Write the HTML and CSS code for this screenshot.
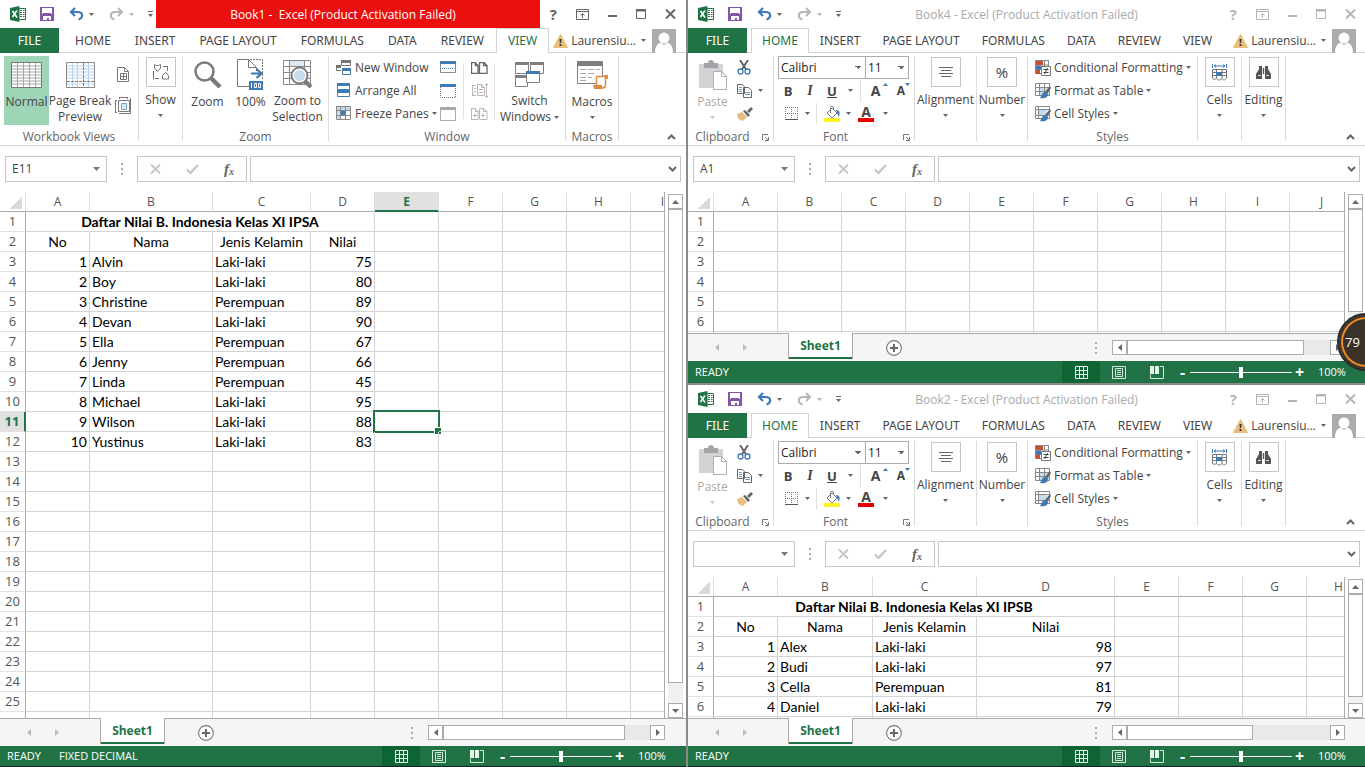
FILE: index.html
```
<!DOCTYPE html>
<html lang="en">
<head>
  <meta charset="UTF-8">
  <meta name="viewport" content="width=device-width, initial-scale=1.0">
  <title>Excel</title>
  <link rel="stylesheet" href="styles.css">
</head>
<body>

  <svg class="sprite" aria-hidden="true">
    <symbol id="excel" viewBox="0 0 16 16">
      <path d="M9 2.5h6.5v11H9" fill="#fff" stroke="#217346"/>
      <path d="M10 4.5h2M13 4.5h1.500M10 6.500h2M13 6.500h1.500M10 8.500h2M13 8.500h1.500M10 10.500h2M13 10.500h1.500" stroke="#217346"/>
      <path d="M0 2l9.500-2v16L0 14z" fill="#217346"/>
      <path d="M2.500 5l4.500 6.500M7 4.500l-4.500 6.500" stroke="#fff" stroke-width="1.600"/>
    </symbol>
    <symbol id="save" viewBox="0 0 14 14">
      <path d="M0 0h14v14H0z" fill="#8355a4"/>
      <path d="M2 1h10v6H2zM3 9h8v4H9v-2H7v2H3z" fill="#fff"/>
      <path d="M3 7h8v-1H3z" fill="#8355a4"/>
    </symbol>
    <symbol id="undo" viewBox="0 0 15 14">
      <path d="M6 1L2 5l4 4M2 5h6.500c6 0 6 6 1 7.500" fill="none" stroke="currentColor" stroke-width="2.200"/>
    </symbol>
    <symbol id="redo" viewBox="0 0 15 14">
      <path d="M9 1l4 4-4 4M13 5H6.500c-6 0-6 6-1 7.500" fill="none" stroke="currentColor" stroke-width="2"/>
    </symbol>
    <symbol id="customize" viewBox="0 0 5 6">
      <path d="M0 0h5v1H0zM0 3h5L2.500 6z" fill="#666"/>
    </symbol>
    <symbol id="arrow" viewBox="0 0 5 3">
      <path d="M0 0h5L2.500 3z" fill="currentColor"/>
    </symbol>
    <symbol id="ribbon-toggle" viewBox="0 0 13 11">
      <path d="M.5.5h12v10H.5zM.5 2.500h12M6.500 9V5M4.500 6.500l2-2 2 2" fill="none" stroke="currentColor"/>
    </symbol>
    <symbol id="minimize" viewBox="0 0 9 11"><path d="M0 6h9v2H0z" fill="currentColor"/></symbol>
    <symbol id="maximize" viewBox="0 0 10 10"><path d="M.5.5h9v9H.5zM0 1.500h10" fill="none" stroke="currentColor"/><path d="M0 0h10v2.500H0z" fill="currentColor"/></symbol>
    <symbol id="close" viewBox="0 0 11 10"><path d="M1 .5l9 9M10 .5l-9 9" stroke="currentColor" stroke-width="2"/></symbol>
    <symbol id="warning" viewBox="0 0 15 14">
      <path d="M7.500.5L14.500 13.500H.5z" fill="#e8bf7a" stroke="#e8bf7a" stroke-linejoin="round"/>
      <path d="M6.500 5h2l-.4 4h-1.200zM6.600 10h1.800v2H6.600z" fill="#333"/>
    </symbol>
    <symbol id="avatar" viewBox="0 0 24 24">
      <path d="M0 0h24v24H0z" fill="#ababab"/>
      <circle cx="12" cy="9" r="5.500" fill="#fff"/>
      <path d="M3 24c0-9 4-10 6-10l3 2 3-2c2 0 6 1 6 10z" fill="#fff"/>
    </symbol>
    <symbol id="collapse" viewBox="0 0 9 6"><path d="M1 5l3.500-3.500L8 5" fill="none" stroke="#666" stroke-width="2"/></symbol>
    <symbol id="expand" viewBox="0 0 9 6"><path d="M1 1l3.500 3.500L8 1" fill="none" stroke="#666" stroke-width="2"/></symbol>
    <symbol id="launcher" viewBox="0 0 7 7"><path d="M.5 6V.5H6M3 3l3 3M6.500 3v3.500H3" fill="none" stroke="#777"/></symbol>

    <symbol id="normal" viewBox="0 0 31 26">
      <path d="M.5.5h30v25H.5z" fill="#fff"/>
      <path d="M1 4h29M1 7h29M1 10h29M1 13h29M1 16h29M1 19h29M1 22h29M6.500 1v24M12.500 1v24M18.500 1v24M24.500 1v24" stroke="#a6a6a6"/>
      <path d="M.5.5h30v25H.5z" fill="none" stroke="#777"/>
    </symbol>
    <symbol id="page-break" viewBox="0 0 29 26">
      <path d="M1 4h27M1 7h27M1 10h27M1 13h27M1 16h27M1 22h27M6.500 1v24M11.500 1v24M22.500 1v24" stroke="#b9d3ec"/>
      <path d="M.5.5h28v25H.5z" fill="none" stroke="#8a8a8a"/>
      <path d="M17.500 1v24M1 19.500h27" stroke="#777" stroke-dasharray="3 1"/>
    </symbol>
    <symbol id="page-layout" viewBox="0 0 12 15">
      <path d="M.5.5h7l4 4v10H.5zM7.500.5v4h4M3.500 6.500h6v6h-6zM6.500 6.500v6M3.500 9.500h6" fill="none" stroke="#777"/>
    </symbol>
    <symbol id="custom-views" viewBox="0 0 16 17">
      <path d="M3.500 3.500h11v11h-11zM.5 4v11M0 3.500h2M0 15.500h2M4 .5h9M4.500 0v2M12.500 0v2M15.500 1v15.500H4" fill="none" stroke="#777"/>
      <path d="M6.500 6.500h5v6h-5z" fill="#dbe8f5" stroke="#7aa3cc"/>
    </symbol>
    <symbol id="show" viewBox="0 0 16 16">
      <path d="M.5 15.500V7M2 14.500h4M4.500 7.500L1.500 4V.5l2 1h2l2-1V4zM10 2.500h5M14.500 3v4M9.500 11.500l3-3 3 3v3.500h-6z" fill="none" stroke="#777"/>
    </symbol>
    <symbol id="zoom" viewBox="0 0 28 28">
      <circle cx="10.500" cy="10.500" r="9" fill="#fff" stroke="#7b7b7b" stroke-width="2.500"/>
      <path d="M17 17l9 9" stroke="#7b7b7b" stroke-width="4.500"/>
    </symbol>
    <symbol id="zoom-100" viewBox="0 0 27 32">
      <path d="M12 27.500H.5V.5h11l8 8V12M11.500.5v8h8" fill="none" stroke="#777"/>
      <path d="M13 .5h12.500V20" fill="none" stroke="#777" stroke-dasharray="2 1"/>
      <path d="M14 14.500h10M19.500 10l5 4.500-5 4.500" fill="none" stroke="#3e7ab4" stroke-width="2.200"/>
      <path d="M12 22h14v9H12z" fill="#3e7ab4"/>
      <path d="M14.500 24v5M17.500 24.500h2v4h-2zM21.500 24.500h2v4h-2z" fill="none" stroke="#fff"/>
    </symbol>
    <symbol id="zoom-selection" viewBox="0 0 30 29">
      <path d="M.5.500h27v24H.5zM.5 6.500h27M.5 12.500h27M.5 18.500h27M6.500.5v24M21.500.5v24" fill="none" stroke="#8a8a8a"/>
      <path d="M7 1h14v5H7z" fill="#dbe8f5"/>
      <circle cx="16.500" cy="15.500" r="8" fill="#fff" stroke="#7b7b7b" stroke-width="2"/>
      <circle cx="16.500" cy="15.500" r="5.500" fill="#c5dbf0"/>
      <path d="M22 21l6 6" stroke="#7b7b7b" stroke-width="4"/>
    </symbol>
    <symbol id="new-window" viewBox="0 0 16 16">
      <path d="M5.500.5h9v5h-9zM.5 5.500v5H5" fill="none" stroke="#777"/>
      <path d="M5 0h10v3H5zM0 5h5v3H0z" fill="#777"/>
      <path d="M6.500 8.500h8v6h-8z" fill="#fff" stroke="#3e7ab4"/>
      <path d="M6 8h9v3H6z" fill="#3e7ab4"/>
    </symbol>
    <symbol id="arrange" viewBox="0 0 16 15">
      <path d="M1.500.5h12v6h-12zM1.500 7.500h12v6h-12z" fill="none" stroke="#3e7ab4"/>
      <path d="M1 0h13v3H1zM1 7h13v3H1z" fill="#3e7ab4"/>
    </symbol>
    <symbol id="freeze" viewBox="0 0 16 15">
      <path d="M1 1h14v4H1zM1 5h4v9H1z" fill="#c5dbf0"/>
      <path d="M.5.5h14v13H.5zM.5 4.500h14M.5 9.500h14M4.500.5v13M9.500.5v13" fill="none" stroke="#888"/>
      <path d="M5 5h4v4H5z" fill="#3e7ab4"/>
    </symbol>
    <symbol id="split" viewBox="0 0 16 13">
      <path d="M.5.5h15v11H.5z" fill="none" stroke="#888"/><path d="M0 0h16v3H0z" fill="#3e7ab4"/>
      <path d="M2 7.500h12" stroke="#3e7ab4" stroke-dasharray="1 1"/>
    </symbol>
    <symbol id="hide" viewBox="0 0 16 14">
      <path d="M.5 3v10.500h15V3" fill="none" stroke="#777" stroke-dasharray="1 1"/><path d="M0 0h16v3H0z" fill="#3e7ab4"/>
    </symbol>
    <symbol id="unhide" viewBox="0 0 16 14">
      <path d="M.5.5h15v13H.5z" fill="#fff" stroke="#aaa"/><path d="M0 0h16v3H0z" fill="#aaa"/>
    </symbol>
    <symbol id="side-by-side" viewBox="0 0 17 12">
      <path d="M.5.5H4l3 3v8H.5zM4.500.5v3h3M8.500.5H13l3 3v8H8.500zM12.500.5v3h3" fill="none" stroke="currentColor" stroke-width="1.300"/>
    </symbol>
    <symbol id="reset-position" viewBox="0 0 17 12">
      <path d="M.5.5H4l3 3v8H.5zM4.500.5v3h3M8.500.5H13l3 3v8H8.500zM12.500.5v3h3M2 7.500h4M4 5.500v4M10 7.500h4M12 5.500v4" fill="none" stroke="currentColor"/>
    </symbol>
    <symbol id="sync-scroll" viewBox="0 0 16 15">
      <path d="M5.500 1.500h4l3 3v8h-7zM9.500 1.500v3h3M0 2.500h4M.5 2v11M0 12.500h4M2 5.500h2M2 8.500h2M7 6.500h4M7 9.500h4M14.500 1v13M13 2l1.500-1.500L16 2M13 13l1.500 1.500L16 13" fill="none" stroke="#bdb3bd"/>
    </symbol>
    <symbol id="switch" viewBox="0 0 30 26">
      <path d="M.5.5h13v11H.5zM15.500.5h13v11h-13zM.5 13.500h12v11H.5z" fill="#fff" stroke="#7f7f7f"/>
      <path d="M0 0h14v3H0zM15 0h14v3H15zM0 13h12v3H0z" fill="#7f7f7f"/>
      <path d="M11.500 9.500h13v11h-13z" fill="#fff" stroke="#7f7f7f"/><path d="M11 9h14v3H11z" fill="#3e7ab4"/>
    </symbol>
    <symbol id="macros" viewBox="0 0 31 29">
      <path d="M.5.5h25v22H.5z" fill="#fff" stroke="#7f7f7f"/><path d="M0 0h26v5H0z" fill="#7f7f7f"/>
      <path d="M3 8.500h6M11 8.500h6M19 8.500h4M3 12.500h6M11 12.500h6M3 16.500h6M11 16.500h4M3 19.500h6" stroke="#aaa"/>
      <path d="M19.500 25V15.500h9v8.500c0 2-1 3-3 3h-8" fill="#fff" stroke="#dc8a45" stroke-width="1.500"/>
      <path d="M16 24h9v4h-8zM27 14h4v4h-3z" fill="#dc8a45"/>
    </symbol>

    <symbol id="paste" viewBox="0 0 28 31">
      <path d="M0 4h24v24H0z" fill="#d5d2d6"/>
      <path d="M5 3h4c0-4 6-4 6 0h4v5H5z" fill="#a5a3a6"/>
      <path d="M14.500 11.500h8l5 5v13h-13z" fill="#fff" stroke="#b3abb8"/><path d="M22.500 11.500v5h5" fill="none" stroke="#b3abb8"/>
    </symbol>
    <symbol id="cut" viewBox="0 0 14 15">
      <path d="M3 0l6.500 10M11 0L4.500 10" stroke="#666" stroke-width="2"/>
      <circle cx="3.500" cy="11.500" r="2.500" fill="#fff" stroke="#3e7ab4" stroke-width="1.300"/><circle cx="10.500" cy="11.500" r="2.500" fill="#fff" stroke="#3e7ab4" stroke-width="1.300"/>
    </symbol>
    <symbol id="copy" viewBox="0 0 15 14">
      <path d="M.5.5h5l2 2v7h-7zM6.500 3.500h5l3 3v7h-8z" fill="#fff" stroke="#666"/>
      <path d="M2 3.500h3M2 5.500h3M2 7.500h3M8 8.500h5M8 10.500h5" stroke="#6c9ccb"/>
    </symbol>
    <symbol id="painter" viewBox="0 0 16 14">
      <path d="M0 7l5-2 5 5-4 4c-1-1-2 0-3-1s-2 0-3-6z" fill="#e6bd82"/>
      <path d="M6 4l2-1 5 5-2 2zM10 4l4-4 2 2-4 4z" fill="#666"/>
    </symbol>
    <symbol id="borders" viewBox="0 0 14 13">
      <path d="M0 .5h13M0 6.500h13M.5 0v12M6.500 0v12M12.500 0v12" stroke="#777" stroke-dasharray="1 1"/><path d="M0 12.500h13" stroke="#555"/>
    </symbol>
    <symbol id="fill" viewBox="0 0 16 16">
      <path d="M3 7l5-5 5 5-5 5z" fill="#fff" stroke="#777"/><path d="M6.500 7V1.500c0-1.500 3-1.500 3 0V4" fill="none" stroke="#777"/>
      <path d="M12 4c4 0 4 3 3 7l-2-4z" fill="#3e7ab4"/><path d="M0 12h16v4H0z" fill="#fdf224"/>
    </symbol>
    <symbol id="align" viewBox="0 0 14 11"><path d="M0 .5h14M2 3.500h10M0 6.500h14M2 9.500h10" stroke="#666"/></symbol>
    <symbol id="conditional" viewBox="0 0 16 16">
      <path d="M.5.5h13v13H.5zM.5 5h13M.5 9.500h13M9.500.5v13" fill="none" stroke="#888"/>
      <path d="M1 1h7v4H1zM1 10h4v4H1z" fill="#c84f32"/><path d="M1 5.500h5v4H1z" fill="#3e7ab4"/>
      <path d="M6.500 6.500h9v9h-9z" fill="#fff" stroke="#777"/><path d="M8.500 9.500h5M8.500 12.500h5M12.500 8l-3 6" stroke="#444"/>
    </symbol>
    <symbol id="format-table" viewBox="0 0 16 16">
      <path d="M4 4h11v9H4z" fill="#c5dbf0"/><path d="M.5.5h14v12H.5zM.5 4.500h14M.5 8.500h14M4.500.5v12M9.500.5v12" fill="none" stroke="#888"/>
      <path d="M15 3l-5 6 2 2 4-6z" fill="#666"/><path d="M11 9c-4 0-4 3-6 6 4 1 8 0 8-4z" fill="#3e7ab4"/>
    </symbol>
    <symbol id="cell-styles" viewBox="0 0 16 16">
      <path d="M4 4h8v5H4z" fill="#c5dbf0"/><path d="M.5.5h14v12H.5zM.5 3.500h14M.5 9.500h14M3.500.5v12" fill="none" stroke="#888"/>
      <path d="M15 3l-5 6 2 2 4-6z" fill="#666"/><path d="M11 9c-4 0-4 3-6 6 4 1 8 0 8-4z" fill="#3e7ab4"/>
    </symbol>
    <symbol id="cells" viewBox="0 0 16 17">
      <path d="M.5 0v4M14.500 0v4M2 2h11M4 .5L2 2l2 1.500M11 .5L13 2l-2 1.500" fill="none" stroke="#3e7ab4"/>
      <path d="M.5 5.500h14v9c-2 2-3 2-4.500 0-2 2-4 2-5.500 0-2 1-3 1-4 0zM.5 8.500h14M.5 11.500h14M4.500 5.500v9M10 5.500v9" fill="none" stroke="#777"/>
      <path d="M4 8h6v4H4z" fill="#3e7ab4"/>
    </symbol>
    <symbol id="find" viewBox="0 0 15 14">
      <path d="M3 1h3v2h3V1h3v3l3 5v5H9V9H6v5H0V9l3-5z" fill="#555"/><path d="M6.500 3v6M8.500 3v6M2 10.500h3M10 10.500h3" stroke="#ddd"/>
    </symbol>

    <symbol id="cancel" viewBox="0 0 11 10"><path d="M1 .5l9 9M10 .5l-9 9" stroke="#c6c6c6" stroke-width="2"/></symbol>
    <symbol id="enter" viewBox="0 0 13 10"><path d="M1 5.500l3.500 3.500L12 1" fill="none" stroke="#c6c6c6" stroke-width="2.400"/></symbol>
    <symbol id="plus" viewBox="0 0 16 16"><circle cx="8" cy="8" r="7.400" fill="#fff" stroke="#777" stroke-width="1.100"/><path d="M4 8h8M8 4v8" stroke="#666" stroke-width="2"/></symbol>
    <symbol id="left" viewBox="0 0 4 7"><path d="M4 0v7L0 3.500z" fill="currentColor"/></symbol>
    <symbol id="right" viewBox="0 0 4 7"><path d="M0 0v7l4-3.500z" fill="currentColor"/></symbol>
    <symbol id="up" viewBox="0 0 7 4"><path d="M0 4h7L3.500 0z" fill="currentColor"/></symbol>
    <symbol id="down" viewBox="0 0 7 4"><path d="M0 0h7L3.500 4z" fill="currentColor"/></symbol>
    <symbol id="view-normal" viewBox="0 0 13 13"><path d="M.5.5h12v12H.5zM4.500.5v12M8.500.5v12M.5 4.500h12M.5 8.500h12" fill="none" stroke="#e8f3ec"/></symbol>
    <symbol id="view-page" viewBox="0 0 14 13"><path d="M.5.5h13v12H.5zM3.500 2.500h7v8h-7zM5 4.500h4M5 6.500h4M5 8.500h4" fill="none" stroke="#d5e8dc"/></symbol>
    <symbol id="view-break" viewBox="0 0 14 13"><path d="M.5 8.500v4h13V.5H10" fill="none" stroke="#d5e8dc"/><path d="M0 0h4v8H0zM5 0h4v8H5z" fill="#e8f3ec"/></symbol>
  </svg>

  <template id="view-ribbon">
    <section class="group g-views">
      <div class="tools">
        <button class="big on" data-icon="normal 31 26">Normal</button>
        <button class="big" data-icon="page-break 29 26">Page Break<br>Preview</button>
        <div class="col views-col">
          <button data-icon="page-layout 12 15" aria-label="Page Layout"></button>
          <button data-icon="custom-views 16 17" aria-label="Custom Views"></button>
        </div>
      </div>
      <h2>Workbook Views</h2>
    </section>
    <section class="group g-show">
      <div class="tools"><button class="boxed" data-icon="show 16 16" data-drop>Show</button></div>
    </section>
    <section class="group g-zoom">
      <div class="tools">
        <button class="big" data-icon="zoom 28 28">Zoom</button>
        <button class="big" data-icon="zoom-100 27 32">100%</button>
        <button class="big" data-icon="zoom-selection 30 29">Zoom to<br>Selection</button>
      </div>
      <h2>Zoom</h2>
    </section>
    <section class="group g-window">
      <div class="tools">
        <div class="col">
          <button class="row" data-icon="new-window 16 16">New Window</button>
          <button class="row" data-icon="arrange 16 15">Arrange All</button>
          <button class="row" data-icon="freeze 16 15">Freeze Panes <svg class="drop"><use href="#arrow"/></svg></button>
        </div>
        <div class="col lined">
          <button data-icon="split 16 13" aria-label="Split"></button>
          <button data-icon="hide 16 14" aria-label="Hide"></button>
          <button data-icon="unhide 16 14" aria-label="Unhide" disabled></button>
        </div>
        <div class="col lined">
          <button data-icon="side-by-side 17 12" aria-label="View Side by Side"></button>
          <button data-icon="sync-scroll 16 15" aria-label="Synchronous Scrolling" disabled></button>
          <button data-icon="reset-position 17 12" aria-label="Reset Window Position" disabled></button>
        </div>
        <button class="big" data-icon="switch 30 26">Switch<br>Windows <svg class="drop"><use href="#arrow"/></svg></button>
      </div>
      <h2>Window</h2>
    </section>
    <section class="group g-macros">
      <div class="tools"><button class="big" data-icon="macros 31 29" data-drop>Macros</button></div>
      <h2>Macros</h2>
    </section>
  </template>

  <template id="home-ribbon">
    <section class="group g-clipboard">
      <div class="tools">
        <button class="big" data-icon="paste 28 31" data-drop disabled>Paste</button>
        <div class="col">
          <button class="row" data-icon="cut 14 15" aria-label="Cut"></button>
          <button class="row" data-icon="copy 15 14" aria-label="Copy"><svg class="drop"><use href="#arrow"/></svg></button>
          <button class="row" data-icon="painter 16 14" aria-label="Format Painter"></button>
        </div>
      </div>
      <h2>Clipboard</h2><svg class="launcher"><use href="#launcher"/></svg>
    </section>
    <section class="group g-font">
      <div class="tools col">
        <div class="combos">
          <select aria-label="Font"><option>Calibri</option></select>
          <select aria-label="Font size"><option>11</option></select>
        </div>
        <div class="glyphs">
          <button class="b">B</button><button class="i">I</button><button class="u">U</button>
          <button class="d" aria-label="Underline style"><svg class="drop"><use href="#arrow"/></svg></button>
          <button class="grow">A<svg><use href="#up"/></svg></button><button class="shrink">A<svg><use href="#down"/></svg></button>
        </div>
        <div class="glyphs">
          <button class="bd" data-icon="borders 14 13" aria-label="Borders"><svg class="drop"><use href="#arrow"/></svg></button>
          <button class="fl" data-icon="fill 16 16" aria-label="Fill color"><svg class="drop"><use href="#arrow"/></svg></button>
          <button class="fc"><span>A</span><svg class="drop"><use href="#arrow"/></svg></button>
        </div>
      </div>
      <h2>Font</h2><svg class="launcher"><use href="#launcher"/></svg>
    </section>
    <section class="group g-align"><div class="tools"><button class="boxed" data-icon="align 14 11" data-drop>Alignment</button></div></section>
    <section class="group g-number"><div class="tools"><button class="boxed" data-drop><span class="frame">%</span>Number</button></div></section>
    <section class="group g-styles">
      <div class="tools col">
        <button class="row" data-icon="conditional 16 16">Conditional Formatting <svg class="drop"><use href="#arrow"/></svg></button>
        <button class="row" data-icon="format-table 16 16">Format as Table <svg class="drop"><use href="#arrow"/></svg></button>
        <button class="row" data-icon="cell-styles 16 16">Cell Styles <svg class="drop"><use href="#arrow"/></svg></button>
      </div>
      <h2>Styles</h2>
    </section>
    <section class="group g-cells"><div class="tools"><button class="boxed" data-icon="cells 16 17" data-drop>Cells</button></div></section>
    <section class="group g-cells"><div class="tools"><button class="boxed" data-icon="find 15 14" data-drop>Editing</button></div></section>
  </template>

  <main class="desktop">
    <article class="window" id="book1"></article>
    <article class="window" id="book4"></article>
    <article class="window" id="book2"></article>
  </main>
  <div class="orb">79</div>

  <script src="app.js"></script>
</body>
</html>
```
FILE: styles.css
```
* {
  box-sizing: border-box;
}
html, body {
  height: 100%;
  margin: 0;
  overflow: hidden;
}
body {
  font: 12px/16px "Open Sans", "Noto Sans", sans-serif;
  color: #444;
}
button, input, select {
  font: inherit;
  color: inherit;
  margin: 0;
  padding: 0;
  border: 0;
  background: none;
}
button {
  display: flex;
  align-items: center;
  justify-content: center;
}
svg {
  flex: none;
  display: block;
}
h1, h2 {
  margin: 0;
  font-size: 12px;
  font-weight: normal;
}
.sprite {
  position: absolute;
  width: 0;
  height: 0;
}
.desktop {
  display: grid;
  grid-template: 383fr 382fr / 686fr 677fr;
  gap: 2px;
  height: 100%;
  background: #8a8a8a;
}
.window {
  display: flex;
  flex-direction: column;
  min-width: 0;
  min-height: 0;
  overflow: hidden;
  background: #fff;
}
#book1 {
  grid-row: 1 / 3;
}
.drop {
  width: 5px;
  height: 3px;
  color: #666;
}

/* title bar */
.title {
  display: flex;
  flex: none;
  height: 28px;
}
.quick {
  display: flex;
  align-items: center;
  width: 156px;
  padding-left: 10px;
}
.quick .save { margin-left: 14px; }
.quick .undo { margin-left: 15px; color: #3e7ab4; }
.quick .redo { margin-left: 15px; color: #b5b5b5; }
.quick .undo, .quick .redo { gap: 5px; }
.quick .redo .drop { color: #b5b5b5; }
.quick .customize { margin-left: 14px; }
.title h1 {
  flex: 1;
  padding-right: 10px;
  text-align: center;
  line-height: 29px;
  color: #aaa;
  white-space: pre;
}
.failed h1 {
  background: #eb0f0f;
  color: #fff;
}
.caption {
  display: flex;
  align-items: center;
  justify-content: flex-end;
  gap: 19px;
  width: 146px;
  padding-right: 9px;
  color: #b5b5b5;
}
.failed .caption {
  padding-right: 10px;
  color: #666;
}
.help {
  font-size: 15px;
  font-weight: bold;
}

/* tabs */
.tabs {
  display: flex;
  flex: none;
  height: 25px;
  box-shadow: inset 0 -1px #d4d4d4;
  font-family: "Noto Sans", sans-serif;
}
.tabs a {
  flex: none;
  padding: 0 10px;
  border: 1px solid transparent;
  border-bottom: 0;
  line-height: 24px;
  color: #444;
  text-decoration: none;
  white-space: nowrap;
}
#book1 .tabs a { padding: 0 11px; }
.tabs .file, #book1 .tabs .file {
  width: 59px;
  margin-right: 4px;
  padding: 0;
  text-align: center;
  background: #217346;
  color: #fff;
}
.tabs .active {
  border-color: #d4d4d4;
  background: #fff;
  color: #217346;
}
.user {
  display: flex;
  align-items: center;
  margin-left: auto;
  padding-right: 9px;
  font-family: "Open Sans", sans-serif;
}
#book1 .user { padding-right: 10px; }
.user span { margin: 0 5px 0 3px; }
.user .avatar { margin-left: 6px; }

/* ribbon */
.ribbon {
  display: flex;
  flex: none;
  position: relative;
  height: 93px;
  border-bottom: 1px solid #d4d4d4;
}
.group {
  position: relative;
  flex: none;
  height: 85px;
  margin-top: 3px;
  border-right: 1px solid #dcdcdc;
}
.group h2 {
  line-height: 16px;
  text-align: center;
  color: #666;
}
.launcher {
  position: absolute;
  right: 4px;
  bottom: 0;
  width: 7px;
  height: 7px;
}
.tools {
  display: flex;
  height: 73px;
}
.col {
  display: flex;
  flex-direction: column;
}
.col > button {
  height: 23px;
}
.big {
  flex-direction: column;
  justify-content: flex-start;
  height: 69px;
}
.big .icon {
  display: flex;
  align-items: center;
  height: 38px;
}
.big .label {
  display: block;
  text-align: center;
  white-space: nowrap;
}
.big .drop {
  display: inline-block;
  vertical-align: middle;
}
.big > .drop, .boxed > .drop {
  margin-top: 6px;
}
.on {
  background: #9fd5b7;
}
.boxed {
  flex-direction: column;
  justify-content: flex-start;
  width: 100%;
  padding-top: 1px;
}
.boxed .icon, .frame {
  display: flex;
  align-items: center;
  justify-content: center;
  width: 30px;
  height: 30px;
  margin-bottom: 5px;
  border: 1px solid #c6c6c6;
}
.frame {
  font-size: 15px;
}
.row {
  justify-content: flex-start;
  gap: 3px;
  white-space: nowrap;
}
.row .label {
  display: flex;
  align-items: center;
  gap: 3px;
}
button:disabled {
  color: #aaa;
}
button:disabled .drop {
  color: #c6c6c6;
}
.collapse {
  position: absolute;
  right: 10px;
  bottom: 5px;
}
.g-views { width: 139px; }
.g-views .tools { padding-left: 4px; }
.g-views .on { width: 45px; }
.g-views .on + .big { width: 62px; }
.views-col { gap: 8px; width: 24px; padding-top: 7px; }
.g-show { width: 44px; }
.g-zoom { width: 146px; }
.g-zoom .tools { padding-left: 3px; }
.g-zoom .big { width: 43px; }
.g-zoom .big:last-child { width: 51px; }
.g-window { width: 237px; }
.g-window .tools { padding-left: 7px; }
.g-window .col:first-child { width: 97px; }
.g-window .big { width: 69px; }
.lined {
  align-items: center;
  width: 31px;
  background: linear-gradient(#e1e1e1, #e1e1e1) right 7px / 1px 56px no-repeat;
}
.lined:nth-child(2) { padding-right: 2px; }
.lined svg { color: #666; }
.lined :disabled svg { color: #bdb3bd; }
.g-macros { width: 53px; }
.g-macros .big { width: 100%; }

.g-clipboard { width: 86px; }
.g-clipboard h2 { padding-right: 16px; }
.g-clipboard .big { width: 49px; }
.g-clipboard .row { gap: 6px; }
.g-font { width: 141px; }
.g-font .tools { padding-left: 4px; }
.g-font h2 { padding-right: 17px; }
.g-align { width: 62px; }
.g-number { width: 51px; }
.g-styles { width: 170px; }
.g-styles .tools { padding-left: 7px; }
.g-cells { width: 44px; }
.combos {
  display: flex;
  height: 23px;
}
.combos select {
  width: 43px;
  padding: 0 2px;
  border: 1px solid #ababab;
  appearance: none;
  color: #222;
  background: linear-gradient(45deg, transparent 50%, #666 50%) right 7px top 9px / 3px 3px no-repeat,
    linear-gradient(135deg, #666 50%, transparent 50%) right 4px top 9px / 3px 3px no-repeat;
}
.combos select:first-child {
  width: 88px;
}
.combos select + select {
  border-left: 0;
}
.glyphs {
  display: flex;
  align-items: center;
  height: 23px;
}
.glyphs button {
  height: 22px;
  font-size: 13px;
}
.glyphs .b { width: 20px; font-weight: bold; }
.glyphs .i { width: 24px; font: italic bold 14px "Liberation Serif", serif; }
.glyphs .u { width: 20px; font-weight: bold; text-decoration: underline; }
.glyphs .d { width: 16px; }
.glyphs .grow, .glyphs .shrink {
  position: relative;
  width: 22px;
  font-size: 12px;
  font-weight: bold;
}
.glyphs .grow {
  width: 30px;
  margin-left: 2px;
  border-left: 1px solid #e1e1e1;
  font-size: 14px;
}
.glyphs .grow svg, .glyphs .shrink svg {
  position: absolute;
  top: 3px;
  right: 2px;
  width: 5px;
  height: 3px;
  color: #3e7ab4;
}
.glyphs .bd { width: 38px; gap: 6px; }
.glyphs .fl { width: 42px; gap: 6px; border-left: 1px solid #e1e1e1; }
.glyphs .fc { gap: 9px; }
.fc span {
  width: 16px;
  height: 17px;
  border-bottom: 4px solid #e60000;
  font-size: 14px;
  font-weight: bold;
  line-height: 13px;
}

/* formula bar */
.formula {
  display: flex;
  flex: none;
  height: 46px;
  padding: 10px 5px;
}
.name, .fx, .entry {
  border: 1px solid #c6c6c6;
}
.name {
  display: flex;
  align-items: center;
  width: 102px;
  padding-right: 6px;
}
.name input {
  flex: 1;
  min-width: 0;
  padding-left: 6px;
}
.name svg { width: 7px; height: 4px; color: #777; }
.dots, .grip {
  width: 2px;
  height: 12px;
  background: repeating-linear-gradient(#aaa 0 2px, transparent 2px 5px);
}
.dots {
  margin: 7px 14px;
}
.fx {
  display: flex;
  align-items: center;
  justify-content: space-between;
  width: 110px;
  margin-right: 3px;
  padding: 0 12px;
}
.fx i { font: italic bold 15px/16px "Liberation Serif", serif; color: #666; }
.fx sub { font-size: 10px; line-height: 0; vertical-align: -1px; }
.entry {
  display: flex;
  align-items: center;
  flex: 1;
  padding-right: 3px;
}
.entry input { flex: 1; min-width: 0; height: 24px; }

/* sheet */
.sheet {
  display: flex;
  flex: 1;
  min-height: 0;
  gap: 3px;
  padding-right: 2px;
}
#book1 .sheet { padding-right: 3px; }
.cells {
  flex: 1;
  min-width: 0;
  overflow: hidden;
  border-right: 1px solid #ababab;
}
.cells table {
  table-layout: fixed;
  border-collapse: separate;
  border-spacing: 0;
}
.cells th {
  height: 20px;
  padding: 0;
  border-right: 1px solid #dcdcdc;
  border-bottom: 1px solid #e1e1e1;
  font-size: 13px;
  font-weight: normal;
  line-height: 19px;
  color: #555;
}
.cells thead th {
  border-bottom-color: #ababab;
  font-size: 12px;
}
.cells tbody th {
  border-right-color: #ababab;
}
.cells td {
  position: relative;
  height: 20px;
  padding: 0 2px;
  border-right: 1px solid #d4d4d4;
  border-bottom: 1px solid #d4d4d4;
  font: 14px/19px Lato, "Open Sans", sans-serif;
  color: #000;
  white-space: nowrap;
}
.cells .num { text-align: right; }
.cells .mid { text-align: center; }
.cells .bold { text-align: center; font-weight: bold; }
.cells .current {
  background: #e1e1e1;
  color: #217346;
  font-weight: bold;
}
.cells thead .current { box-shadow: inset 0 -1px #217346; border-bottom-color: #217346; }
.cells tbody .current { border-right: 2px solid #217346; }
.cells .corner {
  background: linear-gradient(135deg, transparent 50%, #d9d9d9 50%) right 3px top 5px / 12px 12px no-repeat;
}
.cursor {
  position: absolute;
  inset: -2px;
  border: 2px solid #217346;
}
.cursor::after {
  content: "";
  position: absolute;
  right: -4px;
  bottom: -4px;
  width: 6px;
  height: 6px;
  border: 1px solid #fff;
  background: #217346;
}
.vscroll, .hscroll {
  display: flex;
  background: #f1f1f1;
  color: #666;
}
.vscroll {
  flex-direction: column;
  width: 15px;
  margin-top: 2px;
}
.vscroll button, .hscroll button {
  flex: none;
  width: 15px;
  height: 15px;
  border: 1px solid #ababab;
  background: #fff;
}
.thumb {
  border: 1px solid #ababab;
  background: #fff;
}
.vscroll .thumb {
  flex: 1;
  margin-bottom: 6px;
}
#book1 .vscroll .thumb { margin-bottom: 20px; }

/* sheet tabs */
.sheets {
  display: flex;
  align-items: center;
  flex: none;
  height: 28px;
  padding-right: 20px;
  border-top: 1px solid #ababab;
  background: #f5f5f5;
}
#book1 .sheets { padding-right: 21px; }
.sheets .nav {
  width: 28px;
  color: #bbb;
}
.sheets .nav:first-child { margin-left: 15px; }
.sheets a {
  align-self: flex-start;
  width: 65px;
  height: 26px;
  margin: -1px 33px 0 29px;
  border: solid #ababab;
  border-width: 0 1px;
  box-shadow: inset 0 -2px #217346;
  background: #fff;
  color: #217346;
  font-weight: bold;
  line-height: 26px;
  text-align: center;
  text-decoration: none;
}
.hscroll {
  width: 233px;
  background: #e9e9e9;
}
#book1 .hscroll { width: 237px; }
.hscroll button:last-child { margin-left: auto; }
.grip {
  margin: 0 15px 0 auto;
}

/* status bar */
.status {
  display: flex;
  align-items: center;
  flex: none;
  height: 22px;
  padding: 0 19px 0 7px;
  background: #217346;
  color: #fff;
  font-size: 11px;
}
#book1 .status { padding-right: 20px; }
#book1 .status, #book2 .status {
  height: 21px;
  border-bottom: 1px solid #1c1c2a;
}
.status span { margin-right: 18px; }
.status .modes {
  display: flex;
  align-self: stretch;
  margin-left: auto;
}
.modes button { width: 38px; }
.modes .on { background: #0f6433; }
.status .sign {
  width: 9px;
  font-size: 16px;
  font-weight: bold;
}
.status .modes + .sign { margin-left: 2px; }
.status input {
  width: 102px;
  height: 11px;
  margin: 0 3px;
  appearance: none;
  background: linear-gradient(#fff, #fff) center / 100% 1px no-repeat;
}
.status input::-webkit-slider-thumb {
  appearance: none;
  width: 4px;
  height: 11px;
  background: #fff;
}
.status output {
  width: 28px;
  margin-left: 14px;
}
.orb {
  position: absolute;
  right: -30px;
  top: 313px;
  width: 58px;
  height: 58px;
  padding-left: 6px;
  border: 2px solid #2b2b2b;
  border-radius: 50%;
  box-shadow: inset 0 0 0 2px #3a342e, inset 0 0 0 4px #ee8a22;
  background: #3a3129;
  color: #fff;
  font-size: 13px;
  line-height: 54px;
}
```
FILE: app.js
```
const TABS = ['HOME', 'INSERT', 'PAGE LAYOUT', 'FORMULAS', 'DATA', 'REVIEW', 'VIEW'];

const BOOKS = [
  {
    id: 'book1', title: 'Book1 -  Excel (Product Activation Failed)', failed: true,
    tab: 'VIEW', ribbon: 'view-ribbon', cell: 'E11', status: ['READY', 'FIXED DECIMAL'], thumb: 182,
    widths: [64, 123, 98, 64, 64, 64, 64, 64, 64], rows: 25, current: [4, 11],
    heading: 'Daftar Nilai B. Indonesia Kelas XI IPSA',
    data: [
      ['Alvin', 'Laki-laki', 75], ['Boy', 'Laki-laki', 80], ['Christine', 'Perempuan', 89],
      ['Devan', 'Laki-laki', 90], ['Ella', 'Perempuan', 67], ['Jenny', 'Perempuan', 66],
      ['Linda', 'Perempuan', 45], ['Michael', 'Laki-laki', 95], ['Wilson', 'Laki-laki', 88],
      ['Yustinus', 'Laki-laki', 83]
    ]
  },
  {
    id: 'book4', title: 'Book4 - Excel (Product Activation Failed)',
    tab: 'HOME', ribbon: 'home-ribbon', cell: 'A1', status: ['READY'], thumb: 177,
    widths: [64, 64, 64, 64, 64, 64, 64, 64, 64, 64], rows: 6
  },
  {
    id: 'book2', title: 'Book2 - Excel (Product Activation Failed)',
    tab: 'HOME', ribbon: 'home-ribbon', cell: '', status: ['READY'], thumb: 126,
    widths: [64, 95, 104, 138, 64, 64, 64, 64], rows: 6,
    heading: 'Daftar Nilai B. Indonesia Kelas XI IPSB',
    data: [['Alex', 'Laki-laki', 98], ['Budi', 'Laki-laki', 97], ['Cella', 'Perempuan', 81], ['Daniel', 'Laki-laki', 79]]
  }
];

function icon(name, w, h, cls = '') {
  return `<svg class="${cls}" width="${w}" height="${h}"><use href="#${name}"/></svg>`;
}

function cells(book) {
  const [curCol, curRow] = book.current || [-1, -1];
  const total = 26 + book.widths.reduce((a, b) => a + b, 0);
  let html = `<table style="width:${total}px"><colgroup><col style="width:26px">`;
  book.widths.forEach((w) => { html += `<col style="width:${w}px">`; });
  html += '</colgroup><thead><tr><th class="corner"></th>';
  book.widths.forEach((w, i) => {
    html += `<th class="${i === curCol ? 'current' : ''}">${String.fromCharCode(65 + i)}</th>`;
  });
  html += '</tr></thead><tbody>';
  for (let r = 1; r <= book.rows + 1; r++) {
    const last = r > book.rows;
    html += `<tr><th class="${r === curRow ? 'current' : ''}">${last ? '' : r}</th>`;
    let c = 0;
    if (book.data && r === 1) {
      html += `<td class="bold" colspan="4">${book.heading}</td>`;
      c = 4;
    }
    for (; c < book.widths.length; c++) {
      let text = '';
      let cls = '';
      if (book.data && r === 2 && c < 4) {
        text = ['No', 'Nama', 'Jenis Kelamin', 'Nilai'][c];
        cls = 'mid';
      } else if (book.data && book.data[r - 3] && c < 4) {
        text = c === 0 ? r - 2 : book.data[r - 3][c - 1];
        cls = c === 0 || c === 3 ? 'num' : '';
      }
      if (c === curCol && r === curRow) text = '<div class="cursor"></div>';
      html += `<td class="${cls}">${text}</td>`;
    }
    html += '</tr>';
  }
  return html + '</tbody></table>';
}

function render(book) {
  const el = document.getElementById(book.id);
  el.innerHTML = `
    <header class="title ${book.failed ? 'failed' : ''}">
      <div class="quick">
        ${icon('excel', 16, 16)}
        <button class="save" aria-label="Save">${icon('save', 14, 14)}</button>
        <button class="undo" aria-label="Undo">${icon('undo', 15, 14)}${icon('arrow', 5, 3, 'drop')}</button>
        <button class="redo" aria-label="Redo">${icon('redo', 15, 14)}${icon('arrow', 5, 3, 'drop')}</button>
        <button class="customize" aria-label="Customize">${icon('customize', 5, 6)}</button>
      </div>
      <h1>${book.title}</h1>
      <div class="caption">
        <button class="help">?</button>
        <button aria-label="Ribbon options">${icon('ribbon-toggle', 13, 11)}</button>
        <button aria-label="Minimize">${icon('minimize', 9, 11)}</button>
        <button aria-label="Maximize">${icon('maximize', 10, 10)}</button>
        <button aria-label="Close">${icon('close', 11, 10)}</button>
      </div>
    </header>
    <nav class="tabs">
      <a class="file" href="#">FILE</a>
      ${TABS.map((t) => `<a href="#" class="${t === book.tab ? 'active' : ''}">${t}</a>`).join('')}
      <div class="user">${icon('warning', 15, 14)}<span>Laurensiu...</span>${icon('arrow', 5, 3, 'drop')}${icon('avatar', 24, 24, 'avatar')}</div>
    </nav>
    <div class="ribbon"></div>
    <div class="formula">
      <div class="name"><input type="text" aria-label="Name box" value="${book.cell}">${icon('down', 7, 4)}</div>
      <div class="dots"></div>
      <div class="fx">
        <button aria-label="Cancel">${icon('cancel', 11, 10)}</button>
        <button aria-label="Enter">${icon('enter', 13, 10)}</button>
        <button><i>f<sub>x</sub></i></button>
      </div>
      <div class="entry"><input type="text" aria-label="Formula">${icon('expand', 9, 6)}</div>
    </div>
    <div class="sheet">
      <div class="cells">${cells(book)}</div>
      <div class="vscroll">
        <button aria-label="Scroll up">${icon('up', 7, 4)}</button>
        <div class="thumb"></div>
        <button aria-label="Scroll down">${icon('down', 7, 4)}</button>
      </div>
    </div>
    <div class="sheets">
      <button class="nav" aria-label="Previous sheet">${icon('left', 4, 7)}</button>
      <button class="nav" aria-label="Next sheet">${icon('right', 4, 7)}</button>
      <a href="#">Sheet1</a>
      <button aria-label="New sheet">${icon('plus', 16, 16)}</button>
      <div class="grip"></div>
      <div class="hscroll">
        <button aria-label="Scroll left">${icon('left', 4, 7)}</button>
        <div class="thumb" style="width:${book.thumb}px"></div>
        <button aria-label="Scroll right">${icon('right', 4, 7)}</button>
      </div>
    </div>
    <footer class="status">
      ${book.status.map((s) => `<span>${s}</span>`).join('')}
      <div class="modes">
        <button class="on" aria-label="Normal">${icon('view-normal', 13, 13)}</button>
        <button aria-label="Page Layout">${icon('view-page', 14, 13)}</button>
        <button aria-label="Page Break">${icon('view-break', 14, 13)}</button>
      </div>
      <button class="sign">-</button>
      <input type="range" aria-label="Zoom" value="50">
      <button class="sign">+</button>
      <output>100%</output>
    </footer>`;

  const ribbon = el.querySelector('.ribbon');
  ribbon.append(document.getElementById(book.ribbon).content.cloneNode(true));
  ribbon.insertAdjacentHTML('beforeend', `<button class="collapse" aria-label="Collapse">${icon('collapse', 9, 6)}</button>`);
  ribbon.querySelectorAll('button[data-icon]').forEach((btn) => {
    const label = btn.innerHTML.trim();
    btn.innerHTML = `<span class="icon">${icon(...btn.dataset.icon.split(' '))}</span>` +
      (label ? `<span class="label">${label}</span>` : '');
  });
  ribbon.querySelectorAll('[data-drop]').forEach((btn) => {
    btn.insertAdjacentHTML('beforeend', icon('arrow', 5, 3, 'drop'));
  });
}

BOOKS.forEach(render);
```
